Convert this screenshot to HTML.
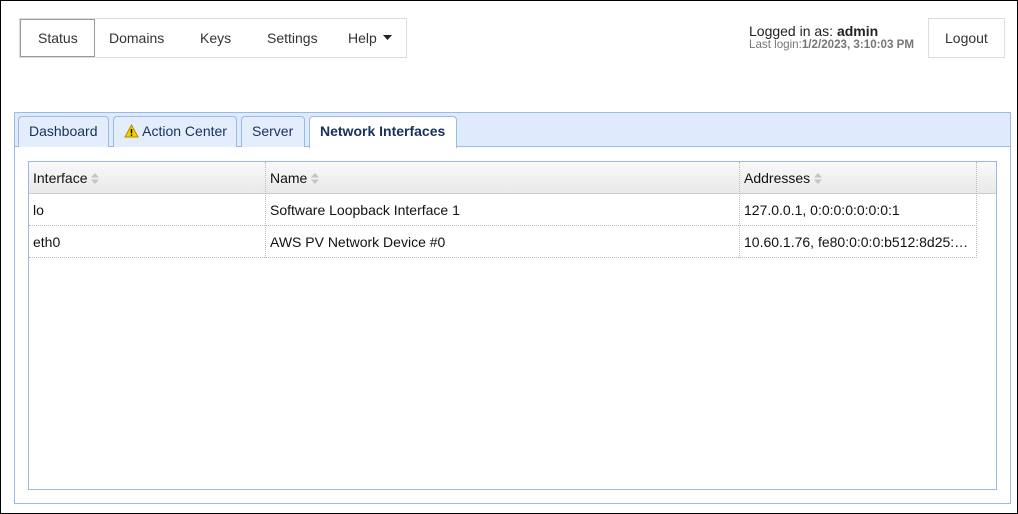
<!DOCTYPE html><html><head><style>
*{box-sizing:border-box}body{margin:0;width:1018px;height:514px;position:relative;font-family:"Liberation Sans",sans-serif;font-size:14px;color:#333;background:#fff;overflow:hidden}
.a{position:absolute}
.frame{left:0;top:0;width:1018px;height:514px;border:1px solid #000}
.nav{left:19px;top:18px;width:388px;height:40px;border:1px solid #ddd}
.nav span{position:absolute;top:11px}
.st{left:0;top:0;width:75px;height:38px;border:1px solid #999;background:#fff}
.tabbar{left:14px;top:112px;width:997px;height:392px;border:1px solid #99bbe8;background:#fff}
.band{left:0;top:0;width:995px;height:34px;background:#dfeafc;border-bottom:1px solid #99bbe8}
.tab{top:3px;height:31px;border:1px solid #99bbe8;border-bottom:none;border-radius:4px 4px 0 0;background:#e4edfc;padding:6px 0 0 10px;color:#15325a}
.grid{left:13px;top:48px;width:969px;height:329px;border:1px solid #99bbe8}
.hd{left:0;top:0;width:967px;height:32px;background:linear-gradient(#f9f9f9,#e9e9e9);border-bottom:1px solid #ccc}
.c{position:absolute;font-size:14px;color:#111}
.vl{position:absolute;width:0;border-left:1px dotted #bbb}
.hl{position:absolute;height:0;border-top:1px dotted #bbb}
</style></head><body>
<div class="a frame"></div>
<div class="a nav"><div class="a st"></div><span style="left:18px">Status</span><span style="left:89px">Domains</span><span style="left:180px">Keys</span><span style="left:247px">Settings</span><span style="left:328px">Help</span><svg class="a" style="left:363px;top:16px" width="9" height="5"><path d="M0 0h9L4.5 5z" fill="#222"/></svg></div>
<div class="a" style="left:749px;top:23px;font-size:14px;color:#222">Logged in as: <b>admin</b></div>
<div class="a" style="left:749px;top:38px;font-size:11.6px;color:#777">Last login:<b>1/2/2023, 3:10:03 PM</b></div>
<div class="a" style="left:928px;top:18px;width:77px;height:40px;border:1px solid #ddd;padding:11px 0 0 16px">Logout</div>
<div class="a tabbar"><div class="a band"></div>
<div class="a tab" style="left:3px;width:91px">Dashboard</div>
<div class="a tab" style="left:98px;width:124px"><svg width="15" height="14" style="vertical-align:-2px" viewBox="0 0 15 14"><path d="M7.5 1L14 13H1z" fill="#f5d000" stroke="#b08a00"/><rect x="6.8" y="5" width="1.4" height="4.5" fill="#000"/><rect x="6.8" y="10.5" width="1.4" height="1.4" fill="#000"/></svg> Action Center</div>
<div class="a tab" style="left:226px;width:64px">Server</div>
<div class="a tab" style="left:294px;width:148px;background:#fff;height:32px;font-weight:bold;color:#15325a">Network Interfaces</div>
<div class="a grid"><div class="a hd"></div>
<div class="c" style="left:4px;top:8px">Interface <svg width="8" height="11" style="vertical-align:-1px"><path d="M0 4.5L4 0L8 4.5zM0 6.5L4 11L8 6.5z" fill="#c4c4c4"/></svg></div>
<div class="c" style="left:241px;top:8px">Name <svg width="8" height="11" style="vertical-align:-1px"><path d="M0 4.5L4 0L8 4.5zM0 6.5L4 11L8 6.5z" fill="#c4c4c4"/></svg></div>
<div class="c" style="left:715px;top:8px">Addresses <svg width="8" height="11" style="vertical-align:-1px"><path d="M0 4.5L4 0L8 4.5zM0 6.5L4 11L8 6.5z" fill="#c4c4c4"/></svg></div>
<div class="vl" style="left:236px;top:0;height:96px"></div><div class="vl" style="left:710px;top:0;height:96px"></div><div class="vl" style="left:947px;top:0;height:96px"></div>
<div class="hl" style="left:0;top:63px;width:948px"></div><div class="hl" style="left:0;top:95px;width:948px"></div>
<div class="c" style="left:4px;top:40px">lo</div><div class="c" style="left:241px;top:40px">Software Loopback Interface 1</div><div class="c" style="left:715px;top:40px">127.0.0.1, 0:0:0:0:0:0:0:1</div>
<div class="c" style="left:4px;top:72px">eth0</div><div class="c" style="left:241px;top:72px">AWS PV Network Device #0</div><div class="c" style="left:715px;top:72px">10.60.1.76, fe80:0:0:0:b512:8d25:…</div>
</div></div>
</body></html>
